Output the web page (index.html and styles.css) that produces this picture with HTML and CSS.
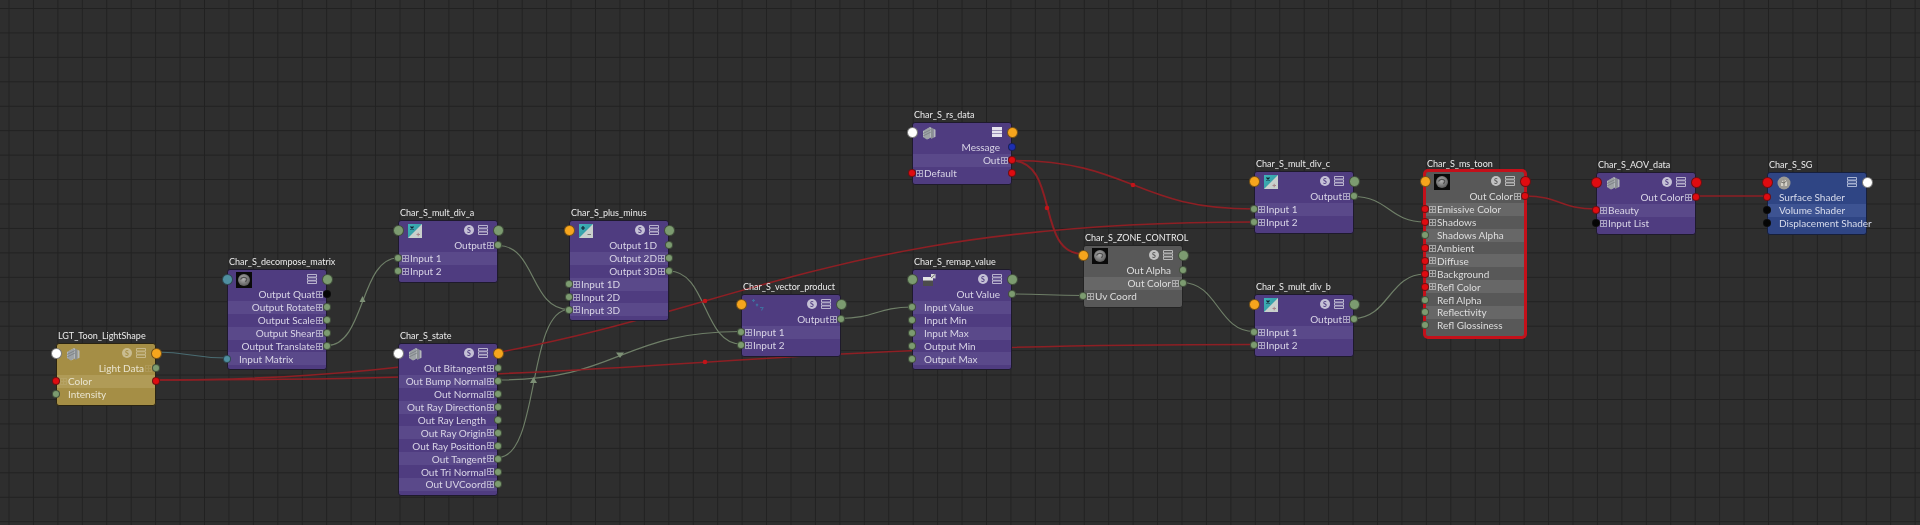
FILE: index.html
```html
<!DOCTYPE html>
<html lang="en">
<head>
<meta charset="utf-8">
<title>Node Editor</title>
<link rel="stylesheet" href="styles.css">
</head>
<body>
<svg class="defs" width="0" height="0" aria-hidden="true">
  <defs>
    <radialGradient id="ball" cx="45%" cy="40%" r="60%"><stop offset="0" stop-color="#b4b4b4"/><stop offset="1" stop-color="#5c5c5c"/></radialGradient>
    <linearGradient id="teal" x1="0" y1="0" x2="1" y2="1"><stop offset="0" stop-color="#3fb4ba"/><stop offset="1" stop-color="#2f8f9a"/></linearGradient>
  </defs>
  <symbol id="i-mult" viewBox="0 0 14 14">
    <rect width="14" height="14" fill="url(#teal)"/>
    <path d="M14 0V14H0Z" fill="#c9d0cc"/>
    <path d="M2.5 2.5l3 3M5.5 2.5l-3 3" stroke="#123" stroke-width="1.2"/>
    <path d="M8.5 10.5h3.5M10.2 8.8v3.5" stroke="#a8868c" stroke-width="1"/>
  </symbol>
  <symbol id="i-plus" viewBox="0 0 14 14">
    <rect width="14" height="14" fill="url(#teal)"/>
    <path d="M14 0V14H0Z" fill="#c9d0cc"/>
    <path d="M2 4h4M4 2v4" stroke="#123" stroke-width="1.2"/>
    <path d="M8.5 10.5h3.5" stroke="#777" stroke-width="1"/>
  </symbol>
  <symbol id="i-tiles" viewBox="0 0 14 14">
    <path d="M1 5l7-4 1 .5v10L5 13.500 1 11Z" fill="#b4b8bb"/>
    <path d="M9 1.500l2.500 1.300v9L9 13Z" fill="#8a8f93"/>
    <path d="M11.500 2.800l2 1v7l-2 1Z" fill="#b4b8bb"/>
    <path d="M3 4v8.500M5 3v10M7 2v10M1 7.500l8-4M1 10l8-4" stroke="#6a6f73" stroke-width=".6" fill="none"/>
  </symbol>
  <symbol id="i-ball" viewBox="0 0 16 16">
    <rect width="16" height="16" fill="#0a0a0a"/>
    <circle cx="8" cy="8" r="6" fill="url(#ball)"/>
    <path d="M4.500 7.500c1-2.500 5-3 6.500-.5M11 7l-1.500 3" stroke="#4e4e4e" stroke-width="1.200" fill="none"/>
  </symbol>
  <symbol id="i-remap" viewBox="0 0 14 14">
    <rect x="1" y="4" width="10" height="9" fill="#4c4c4c"/>
    <rect x="1" y="4" width="10" height="3.500" fill="#e4e4e4"/>
    <path d="M9 1h4.500v4.500L9 5Z" fill="#d5d5d5"/>
    <path d="M9 5l4-3.500" stroke="#555" stroke-width=".8"/>
  </symbol>
  <symbol id="i-vec" viewBox="0 0 14 14">
    <path d="M1 2.500h3M2.500 1v3M5 6l2 2M7 6L5 8M9 9.500h3l-1.500 3" stroke="#3f6f9f" stroke-width="1.100" fill="none"/>
  </symbol>
  <symbol id="i-sg" viewBox="0 0 14 14">
    <circle cx="7" cy="7" r="6.500" fill="#9c9a94"/>
    <path d="M4 10V6l3-2.500 3 1V10Z" fill="#d4d1c8"/>
    <path d="M7 3.500V10M4 6l3 1 3-2.500" stroke="#56544f" stroke-width=".7" fill="none"/>
  </symbol>
  <symbol id="i-stack" viewBox="0 0 10 10">
    <path d="M.5 .5h9v2.500h-9zM.5 3.800h9v2.500h-9zM.5 7h9v2.500h-9z" fill="none" stroke="currentColor" stroke-width=".9"/>
  </symbol>
  <symbol id="i-stack-solid" viewBox="0 0 10 10">
    <path d="M0 0h10v3h-10zM0 3.500h10v3h-10zM0 7h10v3h-10z" fill="currentColor"/>
  </symbol>
</svg>

<main class="canvas">
  <svg class="wires" width="1920" height="525" viewBox="0 0 1920 525">
    <g class="w-teal"><path d="M156 352C190 352 192 358 227 358"/></g>
    <g class="w-green">
      <path d="M327 345.500C365 345.500 360 258 398 258"/>
      <path d="M498 245.500C536 245.500 530 309.500 569 309.500"/>
      <path d="M498 380C620 380 620 331.500 741 331.500"/>
      <path d="M498 457.500C540 457.500 527 309.500 569 309.500"/>
      <path d="M669 271C707 271 703 344 741 344"/>
      <path d="M840 318.500C875 318.500 877 307 912 307"/>
      <path d="M1011 294C1047 294 1047 295.500 1083 295.500"/>
      <path d="M1182 282.500C1218 282.500 1218 331.500 1254 331.500"/>
      <path d="M1353 196.500C1389 196.500 1389 222 1425 222"/>
      <path d="M1353 318.500C1389 318.500 1389 274 1425 274"/>
      <polygon points="362.500,296 365.500,302 359.500,302"/>
      <polygon points="620,358 616,352.500 624,352.500"/>
      <polygon points="533.500,377 537,383 530,383"/>
    </g>
    <g class="w-red">
      <path d="M156 380C705 380 705 222 1254 222"/>
      <path d="M156 380C705 380 705 344.500 1254 344.500"/>
      <path d="M1011 160.500C1133 160.500 1133 209 1254 209"/>
      <path class="thick" d="M1011 160.500C1060 160.500 1035 254 1083 254"/>
      <path d="M1525 196C1560 196 1560 209 1596 209"/>
      <path d="M1696 196H1767"/>
      <circle cx="705" cy="301" r="2.300"/>
      <circle cx="705" cy="362" r="2.300"/>
      <circle cx="1133" cy="185" r="2.300"/>
      <circle cx="1047" cy="208" r="2.300"/>
    </g>
  </svg>

  <section class="node gold n-lgt">
    <h3 class="title">LGT_Toon_LightShape</h3>
    <header class="head">
      <i class="hp l white"></i><svg class="ico"><use href="#i-tiles"/></svg>
      <b class="s">S</b><svg class="stack"><use href="#i-stack"/></svg><i class="hp r orange"></i>
    </header>
    <div class="row out"><span>Light Data</span><i class="g"></i><i class="p r green"></i></div>
    <div class="row"><i class="p l red"></i><i class="g"></i><span>Color</span><i class="p r red"></i></div>
    <div class="row"><i class="p l green"></i><span>Intensity</span></div>
  </section>

  <section class="node purple n-decomp">
    <h3 class="title">Char_S_decompose_matrix</h3>
    <header class="head">
      <i class="hp l teal"></i><svg class="ico ball"><use href="#i-ball"/></svg>
      <svg class="stack"><use href="#i-stack"/></svg><i class="hp r green"></i>
    </header>
    <div class="row out"><span>Output Quat</span><i class="g"></i><i class="p r black"></i></div>
    <div class="row out"><span>Output Rotate</span><i class="g"></i><i class="p r green"></i></div>
    <div class="row out"><span>Output Scale</span><i class="g"></i><i class="p r green"></i></div>
    <div class="row out"><span>Output Shear</span><i class="g"></i><i class="p r green"></i></div>
    <div class="row out"><span>Output Translate</span><i class="g"></i><i class="p r green"></i></div>
    <div class="row"><i class="p l teal"></i><span>Input Matrix</span></div>
  </section>

  <section class="node purple n-a">
    <h3 class="title">Char_S_mult_div_a</h3>
    <header class="head">
      <i class="hp l green"></i><svg class="ico"><use href="#i-mult"/></svg>
      <b class="s">S</b><svg class="stack"><use href="#i-stack"/></svg><i class="hp r green"></i>
    </header>
    <div class="row out"><span>Output</span><i class="g"></i><i class="p r green"></i></div>
    <div class="row"><i class="p l green"></i><i class="g"></i><span>Input 1</span></div>
    <div class="row"><i class="p l green"></i><i class="g"></i><span>Input 2</span></div>
  </section>

  <section class="node purple n-state">
    <h3 class="title">Char_S_state</h3>
    <header class="head">
      <i class="hp l white"></i><svg class="ico"><use href="#i-tiles"/></svg>
      <b class="s">S</b><svg class="stack"><use href="#i-stack"/></svg><i class="hp r orange"></i>
    </header>
    <div class="row out"><span>Out Bitangent</span><i class="g"></i><i class="p r green"></i></div>
    <div class="row out"><span>Out Bump Normal</span><i class="g"></i><i class="p r green"></i></div>
    <div class="row out"><span>Out Normal</span><i class="g"></i><i class="p r green"></i></div>
    <div class="row out"><span>Out Ray Direction</span><i class="g"></i><i class="p r green"></i></div>
    <div class="row out"><span>Out Ray Length</span><i class="p r green"></i></div>
    <div class="row out"><span>Out Ray Origin</span><i class="g"></i><i class="p r green"></i></div>
    <div class="row out"><span>Out Ray Position</span><i class="g"></i><i class="p r green"></i></div>
    <div class="row out"><span>Out Tangent</span><i class="g"></i><i class="p r green"></i></div>
    <div class="row out"><span>Out Tri Normal</span><i class="g"></i><i class="p r green"></i></div>
    <div class="row out"><span>Out UVCoord</span><i class="g"></i><i class="p r green"></i></div>
  </section>

  <section class="node purple n-plus">
    <h3 class="title">Char_S_plus_minus</h3>
    <header class="head">
      <i class="hp l orange"></i><svg class="ico"><use href="#i-plus"/></svg>
      <b class="s">S</b><svg class="stack"><use href="#i-stack"/></svg><i class="hp r green"></i>
    </header>
    <div class="row out"><span>Output 1D</span><i class="p r green"></i></div>
    <div class="row out"><span>Output 2D</span><i class="g"></i><i class="p r green"></i></div>
    <div class="row out"><span>Output 3D</span><i class="g"></i><i class="p r green"></i></div>
    <div class="row"><i class="p l green"></i><i class="g"></i><span>Input 1D</span></div>
    <div class="row"><i class="p l green"></i><i class="g"></i><span>Input 2D</span></div>
    <div class="row"><i class="p l green"></i><i class="g"></i><span>Input 3D</span></div>
  </section>

  <section class="node purple n-vec">
    <h3 class="title">Char_S_vector_product</h3>
    <header class="head">
      <i class="hp l orange"></i><svg class="ico"><use href="#i-vec"/></svg>
      <b class="s">S</b><svg class="stack"><use href="#i-stack"/></svg><i class="hp r green"></i>
    </header>
    <div class="row out"><span>Output</span><i class="g"></i><i class="p r green"></i></div>
    <div class="row"><i class="p l green"></i><i class="g"></i><span>Input 1</span></div>
    <div class="row"><i class="p l green"></i><i class="g"></i><span>Input 2</span></div>
  </section>

  <section class="node purple n-rs">
    <h3 class="title">Char_S_rs_data</h3>
    <header class="head">
      <i class="hp l white"></i><svg class="ico"><use href="#i-tiles"/></svg>
      <svg class="stack solid"><use href="#i-stack-solid"/></svg><i class="hp r orange"></i>
    </header>
    <div class="row out"><span>Message</span><i class="p r blue"></i></div>
    <div class="row out"><span>Out</span><i class="g"></i><i class="p r red"></i></div>
    <div class="row"><i class="p l red"></i><i class="g"></i><span>Default</span><i class="p r red"></i></div>
  </section>

  <section class="node purple n-remap">
    <h3 class="title">Char_S_remap_value</h3>
    <header class="head">
      <i class="hp l green"></i><svg class="ico"><use href="#i-remap"/></svg>
      <b class="s">S</b><svg class="stack"><use href="#i-stack"/></svg><i class="hp r green"></i>
    </header>
    <div class="row out"><span>Out Value</span><i class="p r green"></i></div>
    <div class="row"><i class="p l green"></i><span>Input Value</span></div>
    <div class="row"><i class="p l green"></i><span>Input Min</span></div>
    <div class="row"><i class="p l green"></i><span>Input Max</span></div>
    <div class="row"><i class="p l green"></i><span>Output Min</span></div>
    <div class="row"><i class="p l green"></i><span>Output Max</span></div>
  </section>

  <section class="node grey n-zone">
    <h3 class="title">Char_S_ZONE_CONTROL</h3>
    <header class="head">
      <i class="hp l orange"></i><svg class="ico ball"><use href="#i-ball"/></svg>
      <b class="s">S</b><svg class="stack"><use href="#i-stack"/></svg><i class="hp r green"></i>
    </header>
    <div class="row out"><span>Out Alpha</span><i class="p r green"></i></div>
    <div class="row out"><span>Out Color</span><i class="g"></i><i class="p r green"></i></div>
    <div class="row"><i class="p l green"></i><i class="g"></i><span>Uv Coord</span></div>
  </section>

  <section class="node purple n-c">
    <h3 class="title">Char_S_mult_div_c</h3>
    <header class="head">
      <i class="hp l orange"></i><svg class="ico"><use href="#i-mult"/></svg>
      <b class="s">S</b><svg class="stack"><use href="#i-stack"/></svg><i class="hp r green"></i>
    </header>
    <div class="row out"><span>Output</span><i class="g"></i><i class="p r green"></i></div>
    <div class="row"><i class="p l green"></i><i class="g"></i><span>Input 1</span></div>
    <div class="row"><i class="p l green"></i><i class="g"></i><span>Input 2</span></div>
  </section>

  <section class="node purple n-b">
    <h3 class="title">Char_S_mult_div_b</h3>
    <header class="head">
      <i class="hp l orange"></i><svg class="ico"><use href="#i-mult"/></svg>
      <b class="s">S</b><svg class="stack"><use href="#i-stack"/></svg><i class="hp r green"></i>
    </header>
    <div class="row out"><span>Output</span><i class="g"></i><i class="p r green"></i></div>
    <div class="row"><i class="p l green"></i><i class="g"></i><span>Input 1</span></div>
    <div class="row"><i class="p l green"></i><i class="g"></i><span>Input 2</span></div>
  </section>

  <section class="node grey selected n-ms">
    <h3 class="title">Char_S_ms_toon</h3>
    <header class="head">
      <i class="hp l orange"></i><svg class="ico ball"><use href="#i-ball"/></svg>
      <b class="s">S</b><svg class="stack"><use href="#i-stack"/></svg><i class="hp r red"></i>
    </header>
    <div class="row out"><span>Out Color</span><i class="g"></i><i class="p r red"></i></div>
    <div class="row"><i class="p l red"></i><i class="g"></i><span>Emissive Color</span></div>
    <div class="row"><i class="p l red"></i><i class="g"></i><span>Shadows</span></div>
    <div class="row"><i class="p l green"></i><span>Shadows Alpha</span></div>
    <div class="row"><i class="p l red"></i><i class="g"></i><span>Ambient</span></div>
    <div class="row"><i class="p l red"></i><i class="g"></i><span>Diffuse</span></div>
    <div class="row"><i class="p l red"></i><i class="g"></i><span>Background</span></div>
    <div class="row"><i class="p l red"></i><i class="g"></i><span>Refl Color</span></div>
    <div class="row"><i class="p l green"></i><span>Refl Alpha</span></div>
    <div class="row"><i class="p l green"></i><span>Reflectivity</span></div>
    <div class="row"><i class="p l green"></i><span>Refl Glossiness</span></div>
  </section>

  <section class="node purple n-aov">
    <h3 class="title">Char_S_AOV_data</h3>
    <header class="head">
      <i class="hp l red"></i><svg class="ico"><use href="#i-tiles"/></svg>
      <b class="s">S</b><svg class="stack"><use href="#i-stack"/></svg><i class="hp r red"></i>
    </header>
    <div class="row out"><span>Out Color</span><i class="g"></i><i class="p r red"></i></div>
    <div class="row"><i class="p l red"></i><i class="g"></i><span>Beauty</span></div>
    <div class="row"><i class="p l black"></i><i class="g"></i><span>Input List</span></div>
  </section>

  <section class="node blue-node n-sg">
    <h3 class="title">Char_S_SG</h3>
    <header class="head">
      <i class="hp l red"></i><svg class="ico sg"><use href="#i-sg"/></svg>
      <svg class="stack"><use href="#i-stack"/></svg><i class="hp r white"></i>
    </header>
    <div class="row"><i class="p l red"></i><span>Surface Shader</span></div>
    <div class="row"><i class="p l black"></i><span>Volume Shader</span></div>
    <div class="row"><i class="p l black"></i><span>Displacement Shader</span></div>
  </section>
</main>
</body>
</html>
```
FILE: styles.css
```css
* { box-sizing: border-box; }
html, body { margin: 0; padding: 0; height: 100%; background: #2e2e2e; overflow: hidden; }
.defs { position: absolute; }

.canvas {
  position: relative;
  width: 1920px;
  height: 525px;
  font-family: "Lato", "Open Sans", sans-serif;
  background-color: #2e2e2e;
  background-image:
    linear-gradient(to right, #212121 1px, transparent 1px),
    linear-gradient(to bottom, #212121 1px, transparent 1px);
  background-size: 24.45px 24.45px;
  background-position: 8.5px 8px;
  filter: blur(.3px);
}

.wires { position: absolute; left: 0; top: 0; }
.wires path { fill: none; stroke-width: 1.2; }
.w-teal path { stroke: #4a6c72; }
.w-green path { stroke: #6f7f68; }
.w-green polygon { fill: #7d9076; }
.w-red path { stroke: #8e1f24; stroke-width: 1.6; }
.w-red path.thick { stroke-width: 2; }
.w-red circle { fill: #c11419; }

.node {
  position: absolute;
  width: 100px;
  border: 1px solid #1e1a2c;
  border-radius: 3px;
  padding-bottom: 4px;
  background: var(--dark);
  color: var(--text);
  font-size: 10px;
  --dark: #4f3c80;
  --light: #5a498a;
  --text: #d9d5e6;
  --icon: #c5c1d6;
}
.purple { --dark: #4f3c80; --light: #5a498a; }
.gold { --dark: #a58e45; --light: #b09b57; --text: #e9e4cf; --icon: #c9bc90; border-color: #2a2412; }
.grey { --dark: #585858; --light: #676767; --text: #dedede; --icon: #c2c2c2; border-color: #232323; }
.blue-node { --dark: #2f4584; --light: #3d5392; --text: #d8dcec; --icon: #b9c2dd; border-color: #161f3c; }
.selected { border-color: #c4101a; box-shadow: 0 0 0 2px #c4101a; }

.n-lgt { left: 56px; top: 343px; }
.n-decomp { left: 227px; top: 269px; }
.n-a { left: 398px; top: 220px; }
.n-state { left: 398px; top: 343px; }
.n-plus { left: 569px; top: 220px; }
.n-vec { left: 741px; top: 294px; }
.n-rs { left: 912px; top: 122px; }
.n-remap { left: 912px; top: 269px; }
.n-zone { left: 1083px; top: 245px; }
.n-c { left: 1254px; top: 171px; }
.n-b { left: 1254px; top: 294px; }
.n-ms { left: 1425px; top: 171px; }
.n-aov { left: 1596px; top: 172px; }
.n-sg { left: 1767px; top: 172px; }

.title {
  position: absolute;
  left: 1px;
  bottom: 100%;
  margin: 0 0 1px;
  font-size: 9px;
  font-weight: 400;
  line-height: 14px;
  white-space: nowrap;
  color: #ececec;
}

.head {
  position: relative;
  display: flex;
  align-items: center;
  gap: 4px;
  height: 18px;
  padding: 0 9px;
}
.ico { width: 14px; height: 14px; margin-right: auto; margin-top: 1px; }
.ico.ball { width: 16px; height: 16px; margin-left: -1px; }
.s {
  width: 10px;
  height: 10px;
  border-radius: 50%;
  background: var(--icon);
  color: var(--dark);
  font-size: 7px;
  font-weight: 700;
  line-height: 10px;
  text-align: center;
}
.stack { width: 10px; height: 10px; color: var(--icon); }
.stack.solid { color: #e5e3ee; }

.row {
  position: relative;
  display: flex;
  align-items: center;
  height: 12.9px;
  padding: 0 11px;
  line-height: 12px;
  white-space: nowrap;
}
.row:nth-of-type(even) { background: var(--light); }
.row.out { justify-content: flex-end; }

.g {
  flex: none;
  width: 7px;
  height: 7px;
  margin: 0 1px 0 -8px;
  border: 1px solid var(--icon);
  opacity: .75;
  background:
    linear-gradient(var(--icon), var(--icon)) center / 100% 1px no-repeat,
    linear-gradient(var(--icon), var(--icon)) center / 1px 100% no-repeat;
}
.out .g { margin: 0 -8px 0 1px; }
.gold .g { opacity: .25; }

.p, .hp {
  position: absolute;
  top: 50%;
  border-radius: 50%;
  border: 1px solid rgba(20, 20, 20, .55);
}
.p { width: 8px; height: 8px; margin-top: -4px; }
.hp { width: 11px; height: 11px; margin-top: -5.5px; }
.p.l { left: -5px; }
.p.r { right: -5px; }
.hp.l { left: -6.5px; }
.hp.r { right: -6.5px; }

.green { background: #7c9b70; }
.orange { background: #f6a51d; }
.white { background: #fff; }
.red { background: #df0b10; }
.teal { background: #4f8fa0; }
.black { background: #050505; }
.blue { background: #1d2fb1; }
```
